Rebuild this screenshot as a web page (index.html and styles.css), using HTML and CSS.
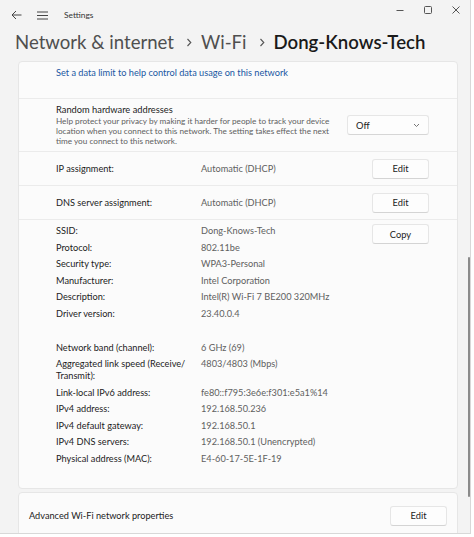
FILE: index.html
```html
<!DOCTYPE html>
<html>
<head>
<meta charset="utf-8">
<link rel="stylesheet" href="styles.css">
</head>
<body>
<div class="window">
  <div class="titlebar">
    <span class="tb-icon back">
      <svg width="11" height="10" viewBox="0 0 11 10"><path d="M5 1 L1 5 L5 9 M1 5 H10.5" fill="none" stroke="#444" stroke-width="1"/></svg>
    </span>
    <span class="tb-icon menu">
      <svg width="11" height="9" viewBox="0 0 11 9"><path d="M0 1 H11 M0 4.5 H11 M0 8 H11" fill="none" stroke="#444" stroke-width="1"/></svg>
    </span>
    <span class="app-title">Settings</span>
    <div class="controls">
      <span class="ctl"><svg width="8" height="8" viewBox="0 0 8 8"><path d="M0.5 4.5 H7.5" stroke="#555" stroke-width="1"/></svg></span>
      <span class="ctl"><svg width="8" height="8" viewBox="0 0 8 8"><rect x="0.5" y="0.5" width="7" height="7" rx="1" fill="none" stroke="#555" stroke-width="1"/></svg></span>
      <span class="ctl"><svg width="8" height="8" viewBox="0 0 8 8"><path d="M0.5 0.5 L7.5 7.5 M7.5 0.5 L0.5 7.5" stroke="#555" stroke-width="1"/></svg></span>
    </div>
  </div>
  <h1 class="crumbs">
    <span class="crumb">Network &amp; internet</span>
    <span class="sep"><svg width="6" height="9" viewBox="0 0 6 9"><path d="M1.5 1 L4.8 4.5 L1.5 8" fill="none" stroke="#555" stroke-width="1.1"/></svg></span>
    <span class="crumb">Wi-Fi</span>
    <span class="sep"><svg width="6" height="9" viewBox="0 0 6 9"><path d="M1.5 1 L4.8 4.5 L1.5 8" fill="none" stroke="#555" stroke-width="1.1"/></svg></span>
    <span class="crumb current">Dong-Knows-Tech</span>
  </h1>

  <div class="content">
    <div class="card main">
      <div class="section link-sec">
        <a class="link">Set a data limit to help control data usage on this network</a>
      </div>
      <div class="section random">
        <div class="random-text">
          <div class="title">Random hardware addresses</div>
          <div class="desc">Help protect your privacy by making it harder for people to track your device location when you connect to this network. The setting takes effect the next time you connect to this network.</div>
        </div>
        <div class="dropdown">
          <span>Off</span>
          <svg width="7" height="5" viewBox="0 0 7 5"><path d="M1 1 L3.5 3.5 L6 1" fill="none" stroke="#666" stroke-width="0.9"/></svg>
        </div>
      </div>
      <div class="section row-sec">
        <div class="kv">
          <span class="k">IP assignment:</span><span class="v">Automatic (DHCP)</span>
        </div>
        <button class="btn">Edit</button>
      </div>
      <div class="section row-sec">
        <div class="kv">
          <span class="k">DNS server assignment:</span><span class="v">Automatic (DHCP)</span>
        </div>
        <button class="btn">Edit</button>
      </div>
      <div class="section props">
        <div class="props-body">
          <div class="kv-list">
            <span class="k">SSID:</span><span class="v">Dong-Knows-Tech</span>
            <span class="k">Protocol:</span><span class="v">802.11be</span>
            <span class="k">Security type:</span><span class="v">WPA3-Personal</span>
            <span class="k">Manufacturer:</span><span class="v">Intel Corporation</span>
            <span class="k">Description:</span><span class="v">Intel(R) Wi-Fi 7 BE200 320MHz</span>
            <span class="k">Driver version:</span><span class="v">23.40.0.4</span>
          </div>
          <div class="kv-list second">
            <span class="k">Network band (channel):</span><span class="v">6 GHz (69)</span>
            <span class="k">Aggregated link speed (Receive/ Transmit):</span><span class="v">4803/4803 (Mbps)</span>
            <span class="k">Link-local IPv6 address:</span><span class="v">fe80::f795:3e6e:f301:e5a1%14</span>
            <span class="k">IPv4 address:</span><span class="v">192.168.50.236</span>
            <span class="k">IPv4 default gateway:</span><span class="v">192.168.50.1</span>
            <span class="k">IPv4 DNS servers:</span><span class="v">192.168.50.1 (Unencrypted)</span>
            <span class="k">Physical address (MAC):</span><span class="v">E4-60-17-5E-1F-19</span>
          </div>
        </div>
        <button class="btn">Copy</button>
      </div>
    </div>

    <div class="card adv">
      <span class="adv-label">Advanced Wi-Fi network properties</span>
      <button class="btn">Edit</button>
    </div>
  </div>
  <div class="scrollbar"></div>
</div>
</body>
</html>
```

FILE: styles.css
```css
* { box-sizing: border-box; }
html, body { margin: 0; padding: 0; background: #ffffff; }
body {
  font-family: "Lato", "Open Sans", sans-serif;
  color: #1b1b1b;
  width: 474px;
  height: 537px;
  overflow: hidden;
}
.window {
  position: relative;
  width: 471px;
  height: 534px;
  background: #f3f3f3;
  border-right: 1px solid #d8d8d8;
  border-bottom: 1px solid #d8d8d8;
  overflow: hidden;
}
.titlebar {
  height: 30px;
  display: flex;
  align-items: center;
  padding-left: 11px;
}
.tb-icon { display: flex; align-items: center; }
.tb-icon.back { width: 26px; }
.tb-icon.menu { width: 27px; }
.app-title { font-size: 8.4px; color: #333; }
.controls {
  margin-left: auto;
  display: flex;
  align-self: flex-start;
  padding-top: 6px;
}
.ctl { width: 28px; height: 10px; display: flex; justify-content: center; }
.crumbs {
  margin: 0;
  height: 24px;
  display: flex;
  align-items: center;
  padding-left: 15px;
  font-size: 18.6px;
  font-weight: 400;
  line-height: 1;
  white-space: nowrap;
}
.crumb { color: #4f4f4f; }
.crumb.current { color: #1a1a1a; font-weight: 600; }
.sep { display: flex; align-items: center; padding: 0 9px 0 12px; }

.content {
  padding: 7px 12px 0 18px;
  display: flex;
  flex-direction: column;
  gap: 3px;
}
.card {
  background: #fbfbfb;
  border: 1px solid #e6e6e6;
  border-radius: 4px;
}
.section {
  border-top: 1px solid #ebebeb;
  padding-left: 37px;
  padding-right: 28px;
}
.section:first-child { border-top: none; }
.link-sec { height: 36px; padding-top: 4px; line-height: 14px; font-size: 9.2px; }
.link { font-size: 9.2px; color: #1a57a2; text-decoration: none; line-height: 14px; }
.random {
  height: 53px;
  display: flex;
  align-items: center;
  justify-content: space-between;
}
.random-text { width: 280px; }
.title { font-size: 9.3px; line-height: 12px; }
.desc { font-size: 8.2px; color: #606060; line-height: 10px; }
.dropdown {
  width: 82px;
  height: 20px;
  background: #fdfdfd;
  border: 1px solid #e6e6e6;
  border-bottom-color: #d6d6d6;
  border-radius: 3px;
  display: flex;
  align-items: center;
  justify-content: space-between;
  padding: 0 8px 0 8px;
  font-size: 9.3px;
}
.row-sec {
  height: 34px;
  display: flex;
  align-items: center;
  justify-content: space-between;
}
.kv { display: flex; font-size: 9.2px; }
.k { width: 145px; color: #1b1b1b; font-size: 9.2px; }
.v { color: #606060; font-size: 9.2px; }
.btn {
  width: 57px;
  height: 20px;
  background: #fdfdfd;
  border: 1px solid #e6e6e6;
  border-bottom-color: #d4d4d4;
  border-radius: 3px;
  font-family: inherit;
  font-size: 9.3px;
  color: #1b1b1b;
  padding: 0;
}
.props {
  display: flex;
  justify-content: space-between;
  align-items: flex-start;
  padding-top: 5px;
  padding-bottom: 23px;
}
.props .btn { margin-top: -1px; }
.kv-list {
  display: grid;
  grid-template-columns: 145px auto;
  row-gap: 4.5px;
  line-height: 12px;
}
.kv-list .k { width: auto; padding-right: 6px; }
.kv-list.second { margin-top: 22px; }
.adv {
  height: 48px;
  display: flex;
  align-items: center;
  justify-content: space-between;
  padding: 0 10px 0 10px;
}
.adv-label { font-size: 9.2px; }
.scrollbar {
  position: absolute;
  right: 0;
  top: 257px;
  width: 2px;
  height: 240px;
  background: #8a8a8a;
  border-radius: 1px;
}
```
